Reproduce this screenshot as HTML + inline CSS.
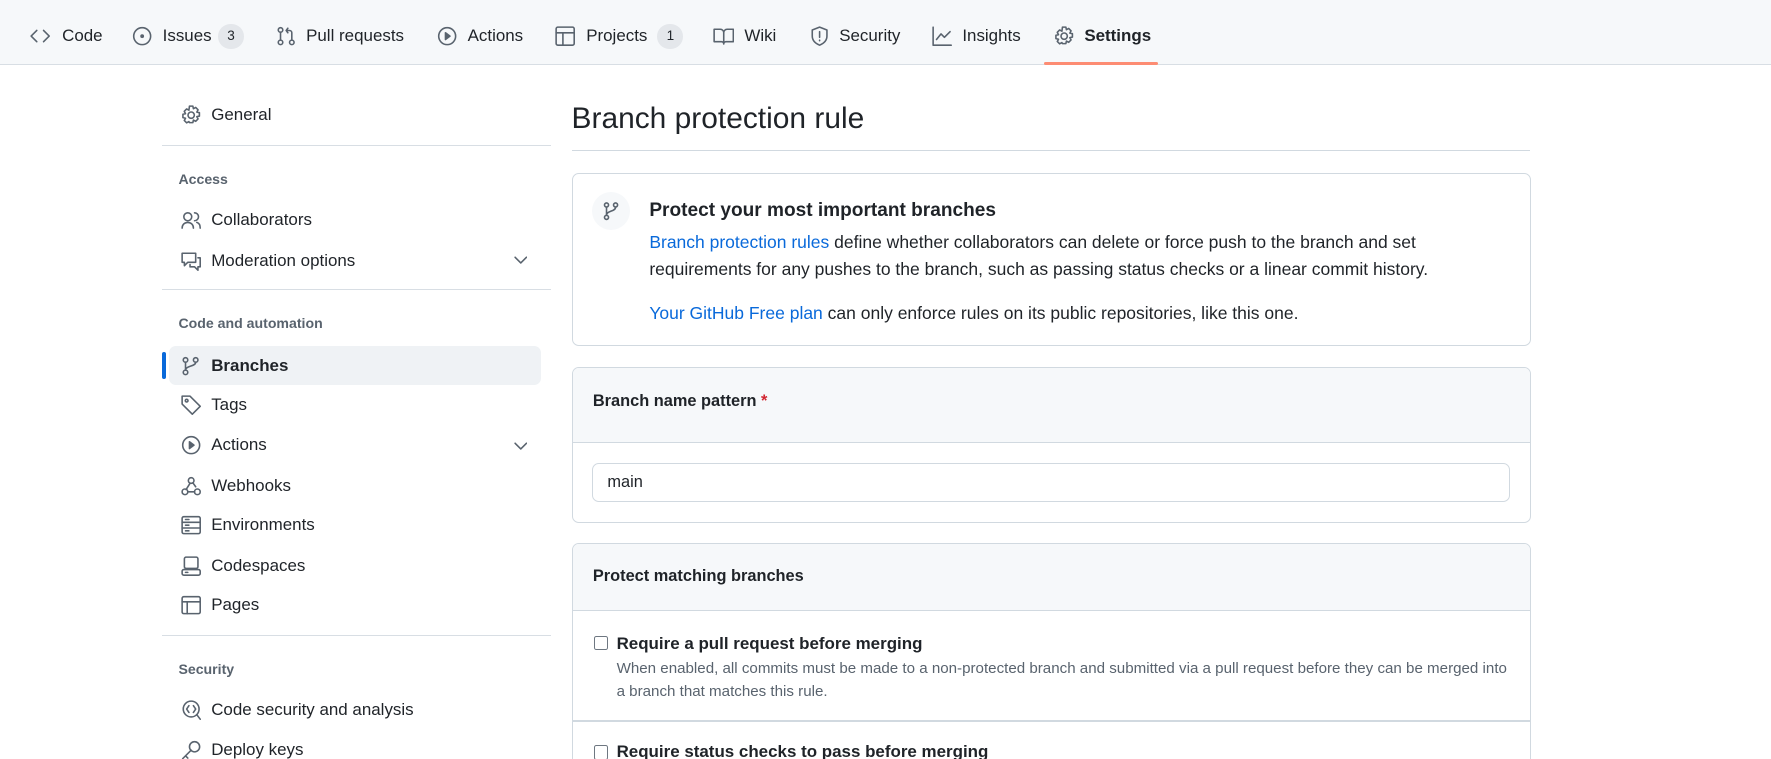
<!DOCTYPE html>
<html><head><meta charset="utf-8">
<style>
html,body{margin:0;padding:0;background:#fff;overflow:hidden}
body{width:1771px;height:759px}
#w{zoom:1.1295;width:1568px;height:672px;position:relative;font-family:"Liberation Sans",sans-serif;color:#1f2328;overflow:hidden}
.a{position:absolute;white-space:nowrap}
.nav{position:absolute;left:0;top:0;width:1568px;height:57px;background:#f6f8fa;border-bottom:1px solid #d8dee4}
.nav .t{position:absolute;top:23px;font-size:15px;line-height:18px}
.badge{position:absolute;top:21px;height:22px;border-radius:11px;background:#e4e7eb;font-size:12px;line-height:22px;text-align:center;width:23px}
svg{position:absolute;fill:none;stroke:#59636e;stroke-width:1.4;stroke-linecap:round;stroke-linejoin:round}
.si{position:absolute;left:187px;font-size:15px;line-height:18px}
.sh{position:absolute;left:158px;font-size:12.5px;color:#59636e;font-weight:bold}
.hr{position:absolute;left:143px;width:345px;height:1px;background:#d8dee4}
.box{position:absolute;left:506px;width:848px;border:1px solid #d1d9e0;border-radius:6px;background:#fff;overflow:hidden}
.hd{background:#f6f8fa;border-bottom:1px solid #d1d9e0;font-weight:bold;font-size:14.5px;padding-left:18px;box-sizing:border-box}
a{color:#0969da;text-decoration:none}
</style></head><body><div id="w">
<div class="nav">
<svg style="left:27px;top:24px" width="18" height="16" viewBox="0 0 18 16"><path d="M6 3 1 8l5 5M12 3l5 5-5 5"/></svg><span class="t" style="left:55px">Code</span>
<svg style="left:117px;top:23px" width="18" height="18"><circle cx="9" cy="9" r="7.5"/><circle cx="9" cy="9" r="1" fill="#59636e"/></svg><span class="t" style="left:144px">Issues</span><span class="badge" style="left:193px">3</span>
<svg style="left:244px;top:23px" width="18" height="18"><circle cx="4" cy="3.5" r="2"/><circle cx="4" cy="14.5" r="2"/><circle cx="14" cy="14.5" r="2"/><path d="M4 5.5v7M14 12.5V6a2 2 0 0 0-2-2H9M10.5 2 9 4l1.5 2"/></svg><span class="t" style="left:271px">Pull requests</span>
<svg style="left:387px;top:23px" width="18" height="18"><circle cx="9" cy="9" r="7.5"/><path d="M7.5 6v6l4-3z" fill="#59636e"/></svg><span class="t" style="left:414px">Actions</span>
<svg style="left:491px;top:23px" width="18" height="18"><rect x="1" y="1" width="16" height="16" rx="1.5"/><path d="M1 6h16M7 6v11"/></svg><span class="t" style="left:519px">Projects</span><span class="badge" style="left:582px">1</span>
<svg style="left:631px;top:24px" width="19" height="16"><path d="M1 2h5.5a3 3 0 0 1 3 3v10a2 2 0 0 0-2-2H1zM18 2h-5.5a3 3 0 0 0-3 3v10a2 2 0 0 1 2-2H18z"/></svg><span class="t" style="left:659px">Wiki</span>
<svg style="left:717px;top:23px" width="17" height="18"><path d="M8.5 1 2 3.5V9c0 4 3 6.5 6.5 8 3.5-1.5 6.5-4 6.5-8V3.5z"/><path d="M8.5 5v5M8.5 12.5v.5"/></svg><span class="t" style="left:743px">Security</span>
<svg style="left:825px;top:23px" width="18" height="18"><path d="M1 1v16h16M4 12l4-5 3 3 5-5"/></svg><span class="t" style="left:852px">Insights</span>
<svg style="left:933px;top:23px" width="18" height="18"><circle cx="9" cy="9" r="2.8"/><path d="M7.5 1h3l.5 2.3 2-1.1 2.1 2.1-1.1 2 2.3.5v3l-2.3.5 1.1 2-2.1 2.1-2-1.1-.5 2.3h-3L7 14.7l-2 1.1-2.1-2.1 1.1-2L1.7 11.2v-3L4 7.7 2.9 5.6 5 3.5l2 1.1z"/></svg><span class="t" style="left:960px;font-weight:bold">Settings</span>
<div class="a" style="left:924px;top:55px;width:101px;height:3px;background:#fd8c73;border-radius:2px"></div>
</div>

<svg style="left:160px;top:93px" width="18" height="18"><circle cx="9" cy="9" r="2.8"/><path d="M7.5 1h3l.5 2.3 2-1.1 2.1 2.1-1.1 2 2.3.5v3l-2.3.5 1.1 2-2.1 2.1-2-1.1-.5 2.3h-3L7 14.7l-2 1.1-2.1-2.1 1.1-2L1.7 11.2v-3L4 7.7 2.9 5.6 5 3.5l2 1.1z"/></svg>
<span class="si" style="top:93px">General</span>
<div class="hr" style="top:128px"></div>
<span class="sh" style="top:151px">Access</span>
<svg style="left:160px;top:186px" width="18" height="18"><circle cx="6" cy="6" r="3.5"/><path d="M1 16c0-3 2.2-5 5-5s5 2 5 5M12 2.5a3.5 3.5 0 0 1 0 7M14 11c2 .6 3 2.5 3 5"/></svg>
<span class="si" style="top:186px">Collaborators</span>
<svg style="left:160px;top:222px" width="18" height="18"><path d="M1 2h12v8H6l-3 3v-3H1zM15 6h2v8h-2v3l-3-3H8v-2"/></svg>
<span class="si" style="top:222px">Moderation options</span>
<svg style="left:455px;top:226px" width="12" height="10"><path d="M1 2l5 5 5-5"/></svg>
<div class="hr" style="top:256px"></div>
<span class="sh" style="top:279px">Code and automation</span>
<div class="a" style="left:150px;top:306px;width:329px;height:35px;background:#eff2f5;border-radius:6px"></div>
<div class="a" style="left:143px;top:312px;width:4px;height:24px;background:#0969da;border-radius:2px"></div>
<svg style="left:160px;top:315px" width="18" height="18"><circle cx="4" cy="3.5" r="2"/><circle cx="4" cy="14.5" r="2"/><circle cx="13" cy="3.5" r="2"/><path d="M4 5.5v7M13 5.5c0 4-9 3-9 7"/></svg>
<span class="si" style="top:315px;font-weight:bold">Branches</span>
<svg style="left:160px;top:350px" width="18" height="18"><path d="M1 1h7l9 9-7 7-9-9z"/><circle cx="5" cy="5" r="1.2"/></svg>
<span class="si" style="top:350px">Tags</span>
<svg style="left:160px;top:385px" width="18" height="18"><circle cx="9" cy="9" r="7.5"/><path d="M7.5 6v6l4-3z" fill="#59636e"/></svg>
<span class="si" style="top:385px">Actions</span>
<svg style="left:455px;top:390px" width="12" height="10"><path d="M1 2l5 5 5-5"/></svg>
<svg style="left:160px;top:421px" width="18" height="18"><circle cx="9" cy="4" r="2.5"/><circle cx="3.5" cy="14" r="2.5"/><circle cx="14.5" cy="14" r="2.5"/><path d="M8 6.5 4.5 12M10.5 6 13 9.5M6 14h6"/></svg>
<span class="si" style="top:421px">Webhooks</span>
<svg style="left:160px;top:456px" width="18" height="18"><rect x="1" y="1.5" width="16" height="15" rx="1.5"/><path d="M1 6.5h16M1 11.5h16M4 4h3M4 9h3M4 14h3"/></svg>
<span class="si" style="top:456px">Environments</span>
<svg style="left:160px;top:492px" width="18" height="18"><rect x="3" y="1" width="12" height="10" rx="1.5"/><rect x="1" y="12" width="16" height="5" rx="1.5"/><path d="M4 14.5h2"/></svg>
<span class="si" style="top:492px">Codespaces</span>
<svg style="left:160px;top:527px" width="18" height="18"><rect x="1" y="1.5" width="16" height="15" rx="1.5"/><path d="M1 6h16M5.5 6v10.5"/></svg>
<span class="si" style="top:527px">Pages</span>
<div class="hr" style="top:562px"></div>
<span class="sh" style="top:585px">Security</span>
<svg style="left:160px;top:620px" width="18" height="18"><circle cx="9" cy="8" r="7"/><path d="M7 5 5 8l2 3M11 5l2 3-2 3M14 13l3 4"/></svg>
<span class="si" style="top:620px">Code security and analysis</span>
<svg style="left:160px;top:655px" width="18" height="18"><circle cx="12" cy="6" r="4.5"/><path d="M9 9 1.5 16.5M4 14l2 2"/></svg>
<span class="si" style="top:655px">Deploy keys</span>

<div class="a" style="left:506px;top:89px;font-size:26.5px;line-height:32px">Branch protection rule</div>
<div class="a" style="left:506px;top:133px;width:849px;height:1px;background:#d1d9e0"></div>

<div class="box" style="top:153px;height:152px">
<div class="a" style="left:17px;top:16px;width:34px;height:34px;border-radius:50%;background:#f6f8fa"></div>
<svg style="left:26px;top:24px" width="16" height="18"><circle cx="4" cy="3.5" r="1.8"/><circle cx="4" cy="14.5" r="1.8"/><circle cx="12" cy="3.5" r="1.8"/><path d="M4 5.5v7M12 5.5c0 4-8 3-8 7"/></svg>
<div class="a" style="left:68px;top:23px;font-size:16.9px;font-weight:bold">Protect your most important branches</div>
<div class="a" style="left:68px;top:49px;font-size:15.5px;line-height:24px;color:#1f2328"><a>Branch protection rules</a> define whether collaborators can delete or force push to the branch and set<br>requirements for any pushes to the branch, such as passing status checks or a linear commit history.</div>
<div class="a" style="left:68px;top:112px;font-size:15.5px;line-height:24px"><a>Your GitHub Free plan</a> can only enforce rules on its public repositories, like this one.</div>
</div>

<div class="box" style="top:325px;height:136px">
<div class="hd" style="height:66px;line-height:60px">Branch name pattern <span style="color:#d1242f">*</span></div>
<div class="a" style="left:17px;top:84px;width:798px;height:33px;border:1px solid #d1d9e0;border-radius:6px;font-size:14.5px;line-height:33px;padding-left:13px;box-sizing:content-box">main</div>
</div>

<div class="box" style="top:481px;height:220px">
<div class="hd" style="height:59px;line-height:58px">Protect matching branches</div>
<div class="a" style="left:19px;top:81px;width:11px;height:11px;border:1px solid #6e7781;border-radius:2px"></div>
<div class="a" style="left:39px;top:79px;font-size:15px;font-weight:bold">Require a pull request before merging</div>
<div class="a" style="left:39px;top:101px;font-size:13.4px;line-height:20px;color:#59636e">When enabled, all commits must be made to a non-protected branch and submitted via a pull request before they can be merged into<br>a branch that matches this rule.</div>
<div class="a" style="left:0;top:156px;width:848px;height:1px;background:#d1d9e0"></div>
<div class="a" style="left:19px;top:178px;width:11px;height:11px;border:1px solid #6e7781;border-radius:2px"></div>
<div class="a" style="left:39px;top:175px;font-size:15px;font-weight:bold">Require status checks to pass before merging</div>
</div>
</div></body></html>
